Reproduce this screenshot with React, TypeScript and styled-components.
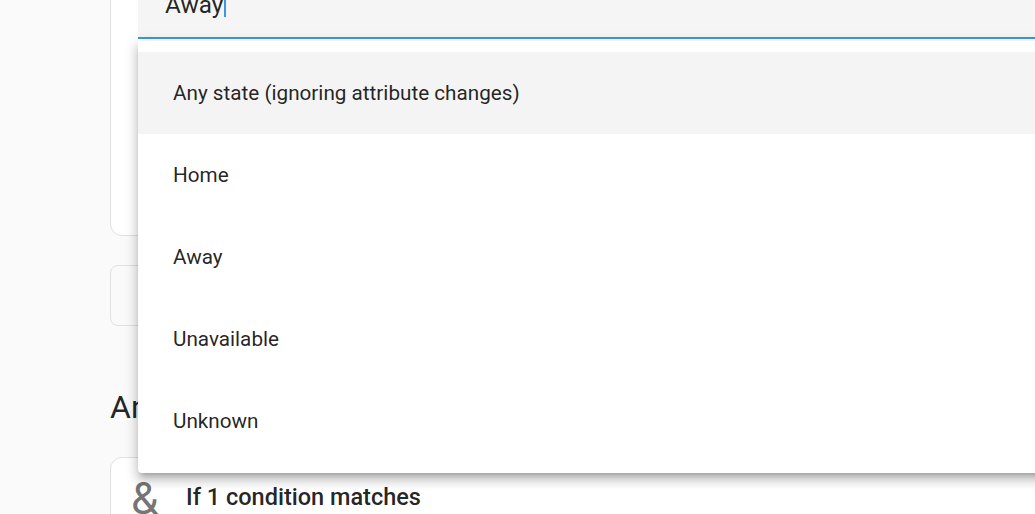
import styled, { createGlobalStyle } from "styled-components";

const GlobalStyle = createGlobalStyle`
  html, body {
    margin: 0;
    padding: 0;
    background: #fafafa;
    overflow: hidden;
    font-family: Roboto, "Noto Sans", sans-serif;
    color: rgba(0, 0, 0, 0.87);
  }
  #root {
    height: 514px;
    position: relative;
    overflow: hidden;
  }
`;

const options = [
  "Any state (ignoring attribute changes)",
  "Home",
  "Away",
  "Unavailable",
  "Unknown",
];

export default function App() {
  return (
    <>
      <GlobalStyle />
      <Page>
        <TriggerCard>
          <TextField>
            <FieldValue>
              Away
              <Caret />
            </FieldValue>
          </TextField>
        </TriggerCard>
        <AddCard />
        <SectionTitle>And if (optional)</SectionTitle>
        <ConditionCard>
          <CardHeader>
            <Ampersand>&amp;</Ampersand>
            <CardTitle>If 1 condition matches</CardTitle>
          </CardHeader>
        </ConditionCard>
      </Page>
      <Menu>
        {options.map((opt, i) => (
          <MenuItem key={opt} $active={i === 0}>
            {opt}
          </MenuItem>
        ))}
      </Menu>
    </>
  );
}

const Page = styled.div`
  padding-left: 110px;
  display: flex;
  flex-direction: column;
`;

const Card = styled.div`
  width: 1100px;
  box-sizing: border-box;
  background: #fff;
  border: 1px solid #e0e0e0;
`;

const TriggerCard = styled(Card)`
  margin-top: -60px;
  height: 296px;
  border-radius: 12px;
  padding: 22px 0 0 27px;
`;

const TextField = styled.div`
  height: 76px;
  box-sizing: border-box;
  background: #f5f5f5;
  border-bottom: 2px solid #3c97e2;
  border-radius: 4px 4px 0 0;
  padding: 30px 0 0 27px;
`;

const FieldValue = styled.div`
  font-size: 24.3px;
  line-height: 24px;
  color: rgba(0, 0, 0, 0.87);
  display: flex;
  align-items: flex-start;
`;

const Caret = styled.span`
  display: inline-block;
  width: 1.5px;
  height: 22px;
  margin: 2px 0 0 1px;
  background: #3c97e2;
`;

const AddCard = styled(Card)`
  margin-top: 29px;
  height: 61px;
  border-radius: 8px;
  background: transparent;
`;

const SectionTitle = styled.h2`
  margin: 61px 0 0;
  font-size: 32px;
  line-height: 40px;
  font-weight: 400;
  color: rgba(0, 0, 0, 0.87);
  white-space: nowrap;
`;

const ConditionCard = styled(Card)`
  margin-top: 30px;
  height: 120px;
  border-radius: 12px;
`;

const CardHeader = styled.div`
  display: flex;
  align-items: flex-start;
  padding: 0 0 0 20px;
`;

const Ampersand = styled.div`
  width: 55px;
  margin-top: 19px;
  font-size: 44px;
  line-height: 44px;
  color: #757575;
`;

const CardTitle = styled.div`
  margin-top: 25px;
  font-size: 23.5px;
  line-height: 28px;
  font-weight: 500;
  color: rgba(0, 0, 0, 0.87);
`;

const Menu = styled.div`
  position: absolute;
  left: 138px;
  top: 41px;
  width: 1000px;
  padding: 11px 0;
  background: #fff;
  border-radius: 0 0 4px 4px;
  box-shadow: 0 5px 5px -3px rgba(0, 0, 0, 0.2),
    0 8px 10px 1px rgba(0, 0, 0, 0.14), 0 3px 14px 2px rgba(0, 0, 0, 0.12);
`;

const MenuItem = styled.div<{ $active?: boolean }>`
  height: 82px;
  display: flex;
  align-items: center;
  padding-left: 35px;
  font-size: 20.7px;
  color: rgba(0, 0, 0, 0.87);
  background: ${(p) => (p.$active ? "#f4f4f4" : "transparent")};
`;
